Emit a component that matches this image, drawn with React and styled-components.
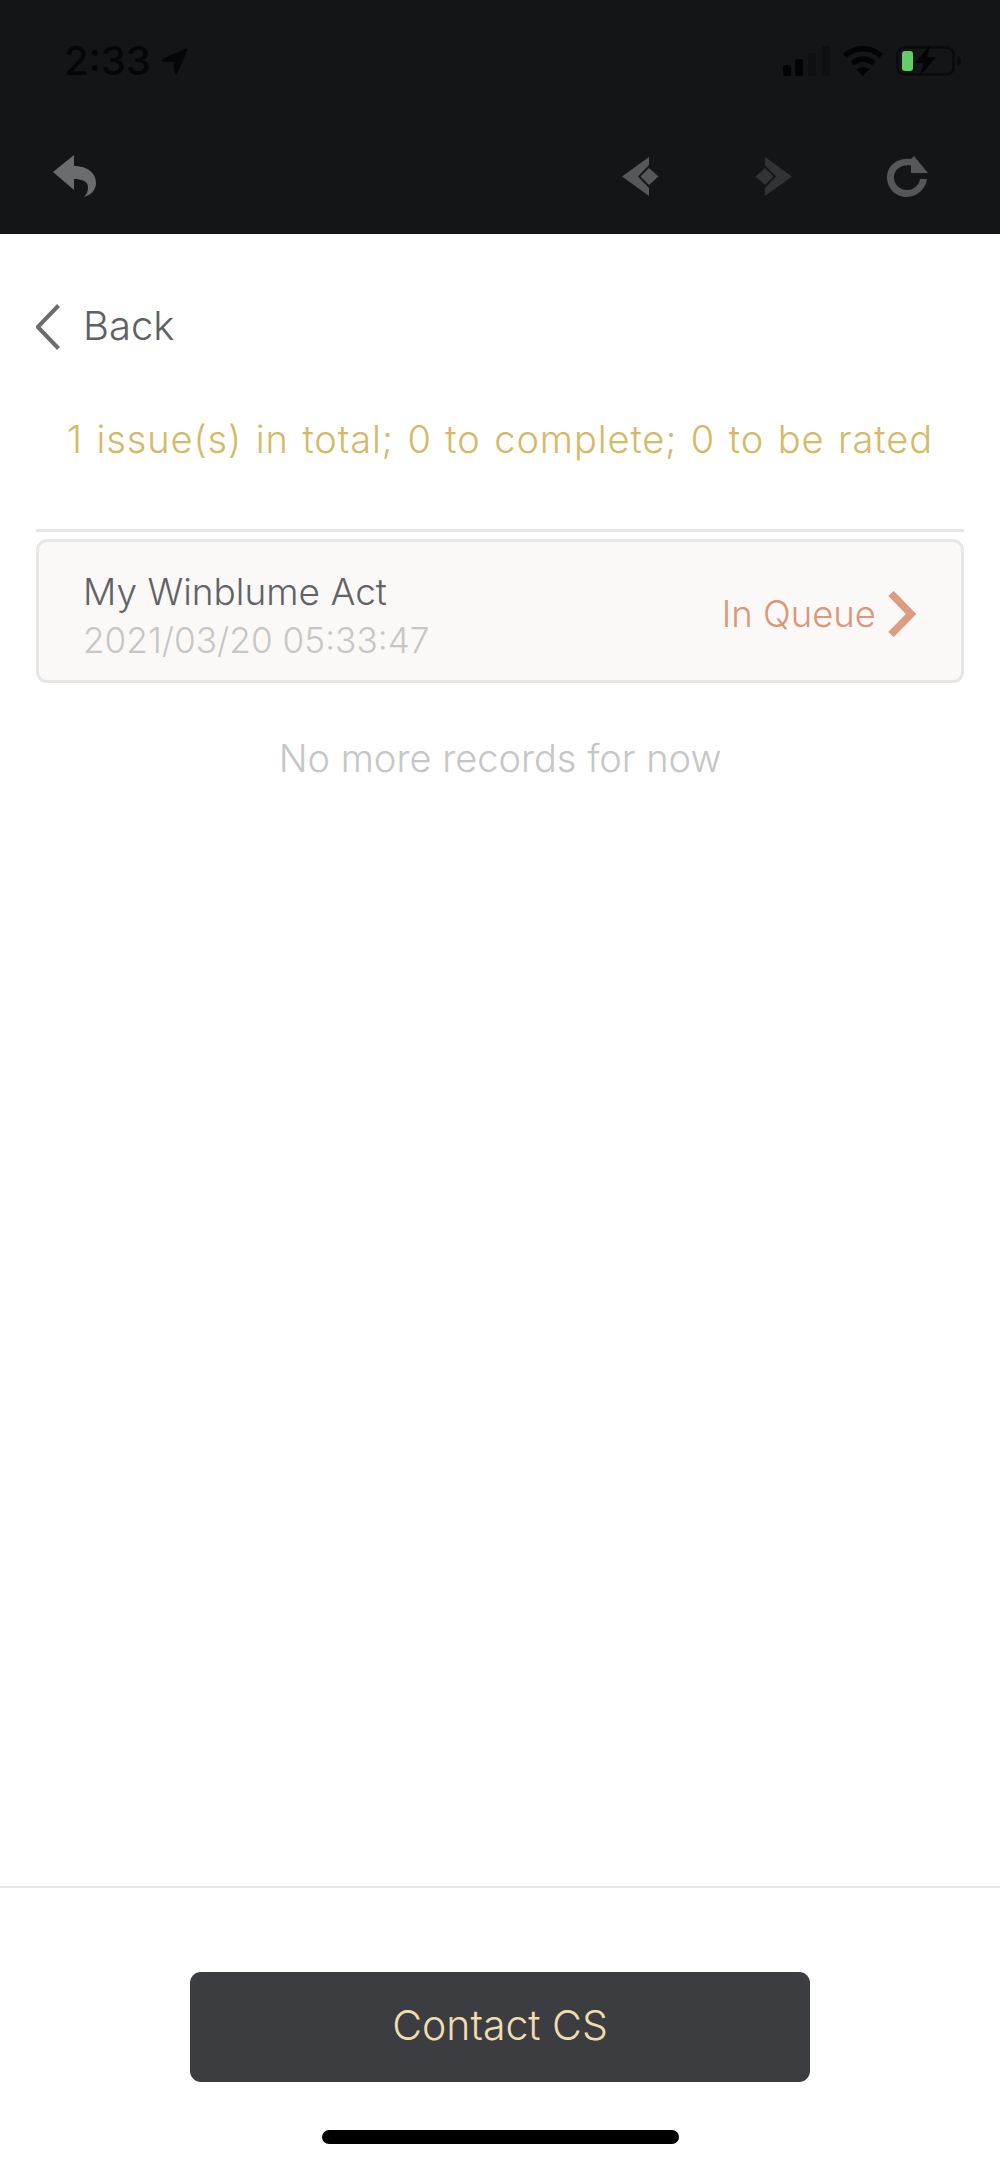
import React from 'react';
import styled, { createGlobalStyle } from 'styled-components';

const GlobalStyle = createGlobalStyle`
  html, body {
    margin: 0;
    padding: 0;
    background: #fff;
    font-family: Inter, 'Noto Sans', 'Liberation Sans', sans-serif;
  }
`;

const Page = styled.div`
  width: 1000px;
  height: 2165px;
  display: flex;
  flex-direction: column;
  background: #fff;
  overflow: hidden;
`;

const Header = styled.header`
  height: 234px;
  flex-shrink: 0;
  background: #131517;
  display: flex;
  flex-direction: column;
  box-sizing: border-box;
  padding-top: 44px;
`;

const StatusBar = styled.div`
  height: 34px;
  display: flex;
  align-items: center;
  padding: 0 38px 0 64px;
`;

const Time = styled.span`
  font-size: 40px;
  line-height: 34px;
  font-weight: 500;
  color: #050607;
  margin-right: 10px;
`;

const StatusIcons = styled.div`
  margin-left: auto;
  display: flex;
  align-items: center;
  gap: 13px;
`;

const Toolbar = styled.div`
  display: flex;
  align-items: center;
  height: 44px;
  margin-top: 76px;
  padding: 0 72px 0 53px;
`;

const ToolSpacer = styled.div`
  flex: 1;
`;

const ToolGroup = styled.div`
  display: flex;
  align-items: center;
`;

const ToolIcon = styled.svg`
  display: block;
  margin-left: ${p => p.$gap || 0}px;
  fill: ${p => p.$color};
`;

const Main = styled.main`
  flex: 1;
  display: flex;
  flex-direction: column;
  padding: 0 36px;
`;

const BackRow = styled.div`
  display: flex;
  align-items: center;
  height: 48px;
  margin-top: 69px;
  gap: 22px;
`;

const BackLabel = styled.span`
  font-size: 40px;
  line-height: 46px;
  font-weight: 300;
  padding-bottom: 2px;
  color: #5f6062;
`;

const Summary = styled.p`
  margin: 63px 0 0;
  text-align: center;
  font-size: 38px;
  line-height: 50px;
  font-weight: 300;
  letter-spacing: 0.9px;
  word-spacing: 2px;
  color: #d4b968;
  white-space: nowrap;
`;

const Rule = styled.div`
  height: 3px;
  margin-top: 65px;
  background: #e6e6e6;
`;

const IssueCard = styled.div`
  margin-top: 7px;
  height: 144px;
  box-sizing: border-box;
  border: 3px solid #e6e6e6;
  border-radius: 11px;
  background: #fbf9f8;
  display: flex;
  align-items: center;
  justify-content: space-between;
  padding: 0 45px 0 44px;
`;

const IssueText = styled.div`
  display: flex;
  flex-direction: column;
  padding-top: 7px;
`;

const IssueTitle = styled.span`
  font-size: 37px;
  line-height: 50px;
  font-weight: 300;
  color: #626366;
`;

const IssueDate = styled.span`
  font-size: 35.200px;
  line-height: 46px;
  font-weight: 300;
  color: #c6c6c6;
`;

const IssueStatus = styled.div`
  display: flex;
  align-items: center;
  gap: 12px;
  font-size: 36.500px;
  line-height: 50px;
  font-weight: 300;
  padding-top: 6px;
  color: #dc9679;
`;

const NoMore = styled.p`
  margin: 50px 0 0;
  text-align: center;
  font-size: 38px;
  line-height: 50px;
  font-weight: 300;
  color: #c6c6c6;
`;

const Footer = styled.footer`
  height: 279px;
  flex-shrink: 0;
  box-sizing: border-box;
  border-top: 2px solid #e6e6e6;
  display: flex;
  flex-direction: column;
  align-items: center;
  padding-top: 84px;
`;

const ContactButton = styled.button`
  width: 620px;
  height: 110px;
  border: none;
  border-radius: 11px;
  background: #3c3d41;
  color: #f0dcaf;
  font-family: inherit;
  font-size: 41px;
  font-weight: 300;
  line-height: 106px;
  padding: 0 0 4px;
`;

const HomeBar = styled.div`
  width: 357px;
  height: 14px;
  margin-top: 48px;
  border-radius: 7px;
  background: #000;
`;

const Signal = () => (
  <svg width="47" height="30" viewBox="0 0 47 30">
    <rect x="0" y="19" width="8" height="11" rx="2" fill="#030404" />
    <rect x="12" y="13" width="8" height="17" rx="2" fill="#030404" />
    <rect x="25" y="7" width="8" height="23" rx="2" fill="#0e1011" />
    <rect x="39" y="0" width="8" height="30" rx="2" fill="#0e1011" />
  </svg>
);

const Wifi = () => (
  <svg width="40" height="30" viewBox="0 0 40 30" fill="#030404">
    <path d="M20 0C12 0 5.500 3 0 8l3.500 4C8 8 13.500 5.500 20 5.500S32 8 36.500 12L40 8C34.500 3 28 0 20 0Z" />
    <path d="M20 10.500c-5 0-9 1.800-12.500 5l3.500 4c2.500-2.300 5.500-3.500 9-3.500s6.500 1.200 9 3.500l3.500-4c-3.500-3.200-7.500-5-12.500-5Z" />
    <path d="M20 21c-2.600 0-4.800.9-6.500 2.500L20 30l6.500-6.500C24.800 21.900 22.600 21 20 21Z" />
  </svg>
);

const Battery = () => (
  <svg width="66" height="32" viewBox="0 0 66 32">
    <rect x="1.500" y="2.500" width="56" height="27" rx="7" fill="none" stroke="#0a0b0c" strokeWidth="2.500" />
    <path d="M61 11c3 .5 4 3 4 5s-1 4.500-4 5Z" fill="#0a0b0c" />
    <rect x="6" y="6" width="11" height="20" rx="3" fill="#63cd6c" />
    <path d="M34 0 19 18h9l-5 14 17-20h-9l4-12Z" fill="#030404" />
  </svg>
);

const App = () => (
  <Page>
    <GlobalStyle />
    <Header>
      <StatusBar>
        <Time>2:33</Time>
        <svg width="27" height="27" viewBox="0 0 27 27" fill="#050607">
          <path d="M25 .5 1.500 11c-1.500.7-1 2.500.5 2.500L12.500 14l1 11c.2 1.500 2 1.800 2.600.4L26.500 2C27 .8 26.200 0 25 .5Z" />
        </svg>
        <StatusIcons>
          <Signal />
          <Wifi />
          <Battery />
        </StatusIcons>
      </StatusBar>
      <Toolbar>
        <ToolIcon $color="#6a6c6d" width="44" height="42" viewBox="0 0 44 42">
          <path d="M21 0v11c12 0 22 6 22 17 0 7-5 12-12 14 3-3 4-6 4-10 0-6-7-8-14-8v11L0 17Z" />
        </ToolIcon>
        <ToolSpacer />
        <ToolGroup>
          <ToolIcon $color="#565758" width="37" height="39" viewBox="0 0 37 39">
            <path d="M27 0v8L16 19.500 27 31v8L0 19.500Z" />
            <path d="M27 11 36.500 19.500 27 28 18.500 19.500Z" />
          </ToolIcon>
          <ToolIcon $gap={96} $color="#323335" width="37" height="39" viewBox="0 0 37 39">
            <path d="M10 0v8L21 19.500 10 31v8L37 19.500Z" />
            <path d="M10 11 .5 19.500 10 28 18.500 19.500Z" />
          </ToolIcon>
          <ToolIcon $gap={95} $color="#565758" width="41" height="41" viewBox="0 0 41 41">
            <path d="M27 0 41 17H24V9.500C15 8 7 13 7 21.500 7 28.500 13 34 20 34s12-5 13-11h7c-1 9.500-9.500 18-20.500 18C8.500 41 0 32 0 21.500 0 10 10 1.500 24 3Z" />
          </ToolIcon>
        </ToolGroup>
      </Toolbar>
    </Header>
    <Main>
      <BackRow>
        <svg width="25" height="46" viewBox="0 0 25 46" fill="none" stroke="#6b6c6e" strokeWidth="4">
          <path d="M22.500 1.500 1.800 23l20.700 21.500" />
        </svg>
        <BackLabel>Back</BackLabel>
      </BackRow>
      <Summary>1 issue(s) in total; 0 to complete; 0 to be rated</Summary>
      <Rule />
      <IssueCard>
        <IssueText>
          <IssueTitle>My Winblume Act</IssueTitle>
          <IssueDate>2021/03/20 05:33:47</IssueDate>
        </IssueText>
        <IssueStatus>
          In Queue
          <svg width="28" height="46" viewBox="0 0 28 46" fill="none" stroke="#dd9b80" strokeWidth="7.500">
            <path d="M3 2.500 23 23 3 43.500" />
          </svg>
        </IssueStatus>
      </IssueCard>
      <NoMore>No more records for now</NoMore>
    </Main>
    <Footer>
      <ContactButton>Contact CS</ContactButton>
      <HomeBar />
    </Footer>
  </Page>
);

export default App;
